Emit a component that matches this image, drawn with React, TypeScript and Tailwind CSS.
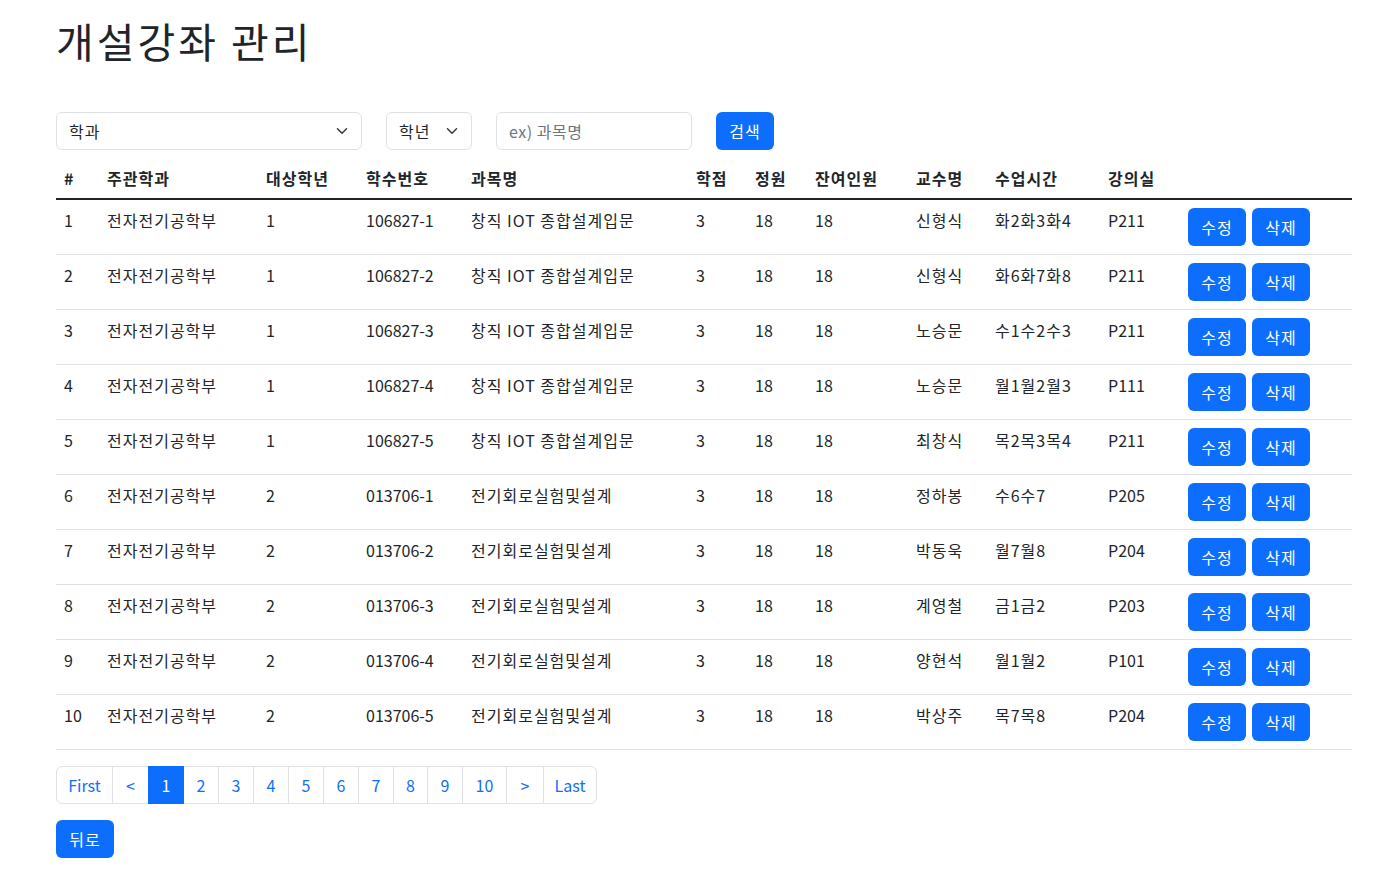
import React from "react";

const rows = [
  ["1", "전자전기공학부", "1", "106827-1", "창직 IOT 종합설계입문", "3", "18", "18", "신형식", "화2화3화4", "P211"],
  ["2", "전자전기공학부", "1", "106827-2", "창직 IOT 종합설계입문", "3", "18", "18", "신형식", "화6화7화8", "P211"],
  ["3", "전자전기공학부", "1", "106827-3", "창직 IOT 종합설계입문", "3", "18", "18", "노승문", "수1수2수3", "P211"],
  ["4", "전자전기공학부", "1", "106827-4", "창직 IOT 종합설계입문", "3", "18", "18", "노승문", "월1월2월3", "P111"],
  ["5", "전자전기공학부", "1", "106827-5", "창직 IOT 종합설계입문", "3", "18", "18", "최창식", "목2목3목4", "P211"],
  ["6", "전자전기공학부", "2", "013706-1", "전기회로실험및설계", "3", "18", "18", "정하봉", "수6수7", "P205"],
  ["7", "전자전기공학부", "2", "013706-2", "전기회로실험및설계", "3", "18", "18", "박동욱", "월7월8", "P204"],
  ["8", "전자전기공학부", "2", "013706-3", "전기회로실험및설계", "3", "18", "18", "계영철", "금1금2", "P203"],
  ["9", "전자전기공학부", "2", "013706-4", "전기회로실험및설계", "3", "18", "18", "양현석", "월1월2", "P101"],
  ["10", "전자전기공학부", "2", "013706-5", "전기회로실험및설계", "3", "18", "18", "박상주", "목7목8", "P204"],
];

const headers = ["#", "주관학과", "대상학년", "학수번호", "과목명", "학점", "정원", "잔여인원", "교수명", "수업시간", "강의실", ""];
const widths = [43, 159, 100, 105, 225, 59, 60, 101, 79, 113, 80, 172];

const hasHangul = (s: string) => /[\uac00-\ud7a3]/.test(s);

const Chevron = () => (
  <svg className="pointer-events-none absolute right-[12px] top-1/2 -translate-y-1/2" width="16" height="12" viewBox="0 0 16 16">
    <path fill="none" stroke="#343a40" strokeLinecap="round" strokeLinejoin="round" strokeWidth="2" d="m2 5 6 6 6-6" />
  </svg>
);

const pages: [string, number][] = [
  ["First", 57],
  ["<", 37],
  ["1", 36],
  ["2", 36],
  ["3", 36],
  ["4", 36],
  ["5", 36],
  ["6", 36],
  ["7", 36],
  ["8", 35],
  ["9", 36],
  ["10", 45],
  [">", 38],
  ["Last", 54],
];

const Btn = ({ children }: { children: React.ReactNode }) => (
  <button className="h-[38px] w-[58px] rounded-[6px] bg-[#0d6efd] text-[16px] tracking-[1px] text-white">{children}</button>
);

export default function App() {
  return (
    <div
      className="min-h-[888px] bg-white text-[16px] text-[#212529]"
      style={{ fontFamily: '"Noto Sans CJK KR", "Noto Sans", sans-serif' }}
    >
      <div className="ml-[56px] w-[1296px] pt-[16px]">
        <h1 className="mb-[48px] text-[41px] leading-[48px] font-normal tracking-[3px]">개설강좌 관리</h1>

        <div className="mb-[8px] flex h-[38px] items-center">
          <div className="relative h-[38px] w-[306px]">
            <select className="h-full w-full appearance-none rounded-[6px] border border-[#dee2e6] bg-white pl-[12px] pr-[36px] text-[16px] leading-[24px] tracking-[1px] text-[#212529] outline-none">
              <option>학과</option>
            </select>
            <Chevron />
          </div>
          <div className="relative ml-[24px] h-[38px] w-[86px]">
            <select className="h-full w-full appearance-none rounded-[6px] border border-[#dee2e6] bg-white pl-[12px] pr-[36px] text-[16px] leading-[24px] tracking-[1px] text-[#212529] outline-none">
              <option>학년</option>
            </select>
            <Chevron />
          </div>
          <input
            className="ml-[24px] h-[38px] w-[196px] rounded-[6px] border border-[#dee2e6] px-[12px] text-[16px] tracking-[0.5px] outline-none placeholder:text-[#6c757d]"
            placeholder="ex) 과목명"
          />
          <div className="ml-[24px]">
            <Btn>검색</Btn>
          </div>
        </div>

        <table className="mb-[16px] w-[1296px] table-fixed border-collapse align-top">
          <colgroup>
            {widths.map((w, i) => (
              <col key={i} style={{ width: w }} />
            ))}
          </colgroup>
          <thead>
            <tr className="border-b-2 border-[#212529]">
              {headers.map((h, i) => (
                <th key={i} className="px-[8px] py-[8px] text-left align-top text-[16px] leading-[24px] font-bold tracking-[1px]">
                  {h}
                </th>
              ))}
            </tr>
          </thead>
          <tbody>
            {rows.map((r, ri) => (
              <tr key={ri} className="border-b border-[#dee2e6]">
                {r.map((c, ci) => (
                  <td
                    key={ci}
                    className={
                      hasHangul(c)
                        ? "px-[8px] py-[8px] align-top leading-[24px] whitespace-nowrap tracking-[1px]"
                        : "px-[8px] py-[8px] align-top leading-[24px] whitespace-nowrap"
                    }
                  >
                    {c}
                  </td>
                ))}
                <td className="px-[8px] py-[8px] align-top">
                  <div className="flex gap-[6px]">
                    <Btn>수정</Btn>
                    <Btn>삭제</Btn>
                  </div>
                </td>
              </tr>
            ))}
          </tbody>
        </table>

        <div className="mb-[16px] flex">
          {pages.map(([p, w], i) => {
            const active = p === "1";
            return (
              <div
                key={i}
                style={{ width: w }}
                className={
                  "flex h-[38px] items-center justify-center leading-[24px] border " +
                  (i > 0 ? "-ml-px " : "") +
                  (i === 0 ? "rounded-l-[6px] " : "") +
                  (i === pages.length - 1 ? "rounded-r-[6px] " : "") +
                  (active ? "relative z-10 border-[#0d6efd] bg-[#0d6efd] text-white" : "border-[#dee2e6] bg-white text-[#0d6efd]")
                }
              >
                {p}
              </div>
            );
          })}
        </div>

        <Btn>뒤로</Btn>
      </div>
    </div>
  );
}
